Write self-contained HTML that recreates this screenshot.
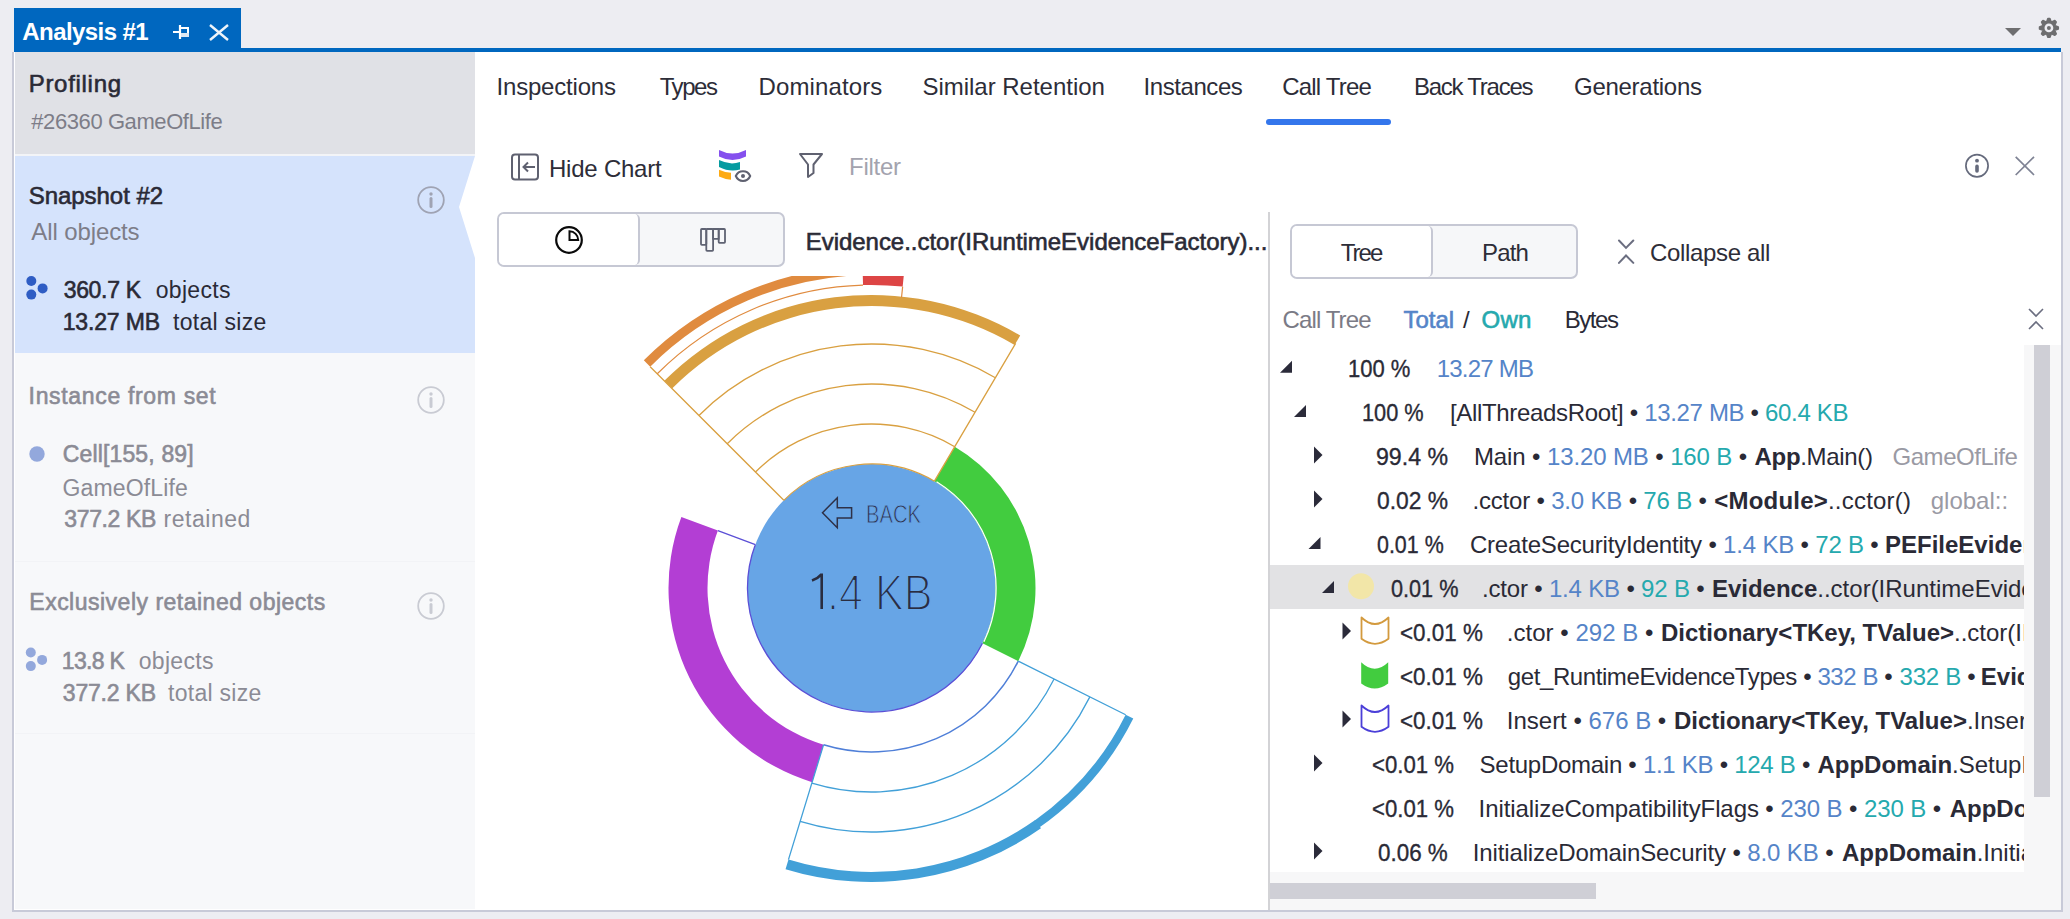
<!DOCTYPE html>
<html><head><meta charset="utf-8">
<style>
html,body{margin:0;padding:0;}
body{width:2070px;height:919px;background:#EDEDF2;position:relative;overflow:hidden;font-family:"Liberation Sans",sans-serif;}
.a{position:absolute;}
.t{position:absolute;white-space:pre;line-height:1;font-family:"Liberation Sans",sans-serif;}
</style></head><body>
<!-- tab -->
<div class="a" style="left:14px;top:8px;width:227px;height:44px;background:#0067BF;"></div>
<div class="a" style="left:14px;top:48px;width:2047px;height:4px;background:#0067BF;"></div>
<!-- main frame -->
<div class="a" style="left:12px;top:52px;width:2051px;height:860px;background:#C8CAD8;"></div>
<div class="a" style="left:14px;top:52px;width:2047px;height:858px;background:#FFFFFF;"></div>
<!-- left panel -->
<div class="a" style="left:15px;top:353px;width:460px;height:556px;background:#F7F8FA;"></div>
<div class="a" style="left:15px;top:561px;width:460px;height:1px;background:#F2F3F6;"></div>
<div class="a" style="left:15px;top:733px;width:460px;height:1px;background:#F2F3F6;"></div>
<div class="a" style="left:15px;top:52px;width:460px;height:102px;background:#E0E1E6;"></div>
<div class="a" style="left:15px;top:154px;width:460px;height:2px;background:#F3F4F7;"></div>
<div class="a" style="left:15px;top:156px;width:460px;height:197px;background:#D5E3FC;clip-path:polygon(0 0,460px 0,444px 51px,460px 102px,460px 197px,0 197px);"></div>
<!-- segmented chart control -->
<div class="a" style="left:497px;top:212px;width:284px;height:51px;border:2px solid #C6C8D4;border-radius:7px;background:#F6F7F9;"></div>
<div class="a" style="left:499px;top:214px;width:139px;height:51px;border-right:2px solid #C6C8D4;border-radius:5px;background:#FFFFFF;"></div>
<!-- tree/path control -->
<div class="a" style="left:1290px;top:224px;width:284px;height:51px;border:2px solid #C6C8D4;border-radius:7px;background:#F6F7F9;"></div>
<div class="a" style="left:1292px;top:226px;width:139px;height:51px;border-right:2px solid #C6C8D4;border-radius:5px;background:#FFFFFF;"></div>
<!-- divider -->
<div class="a" style="left:1268px;top:212px;width:2px;height:698px;background:#D3D3D6;"></div>
<!-- call tree underline -->
<div class="a" style="left:1266px;top:119px;width:125px;height:6px;border-radius:3px;background:#3476EC;"></div>
<!-- selected row -->
<div class="a" style="left:1270px;top:565px;width:754px;height:44px;background:#E2E2E4;"></div>
<svg class='a' style='left:0;top:0' width='2070' height='919' viewBox='0 0 2070 919'><defs><clipPath id='cc'><rect x='476' y='276' width='792' height='634'/></clipPath></defs><g clip-path='url(#cc)'><circle cx='871.5' cy='588.0' r='124' fill='#67A5E6'/><path d='M954.74,446.69 A164,164 0 0 1 1018.27,661.18 L982.47,643.33 A124,124 0 0 0 934.43,481.16 Z' fill='#42CC3F'/><path d='M812.15,782.13 A203,203 0 0 1 681.36,516.91 L717.89,530.57 A164,164 0 0 0 823.55,744.83 Z' fill='#B33ED4'/><path d='M936.60,481.76 A124.6,124.6 0 0 1 983.96,641.64' fill='none' stroke='#FFFFFF' stroke-width='1.2'/><path d='M982.47,643.33 A124,124 0 0 1 755.35,544.57 M755.35,544.57 L717.89,530.57' fill='none' stroke='#5B4FD6' stroke-width='1.3'/><path d='M1018.27,661.18 A164,164 0 0 1 823.55,744.83' fill='none' stroke='#4F7FD8' stroke-width='1.5'/><path d='M1018.27,661.18 L1125.66,714.72 M823.55,744.83 L788.47,859.59 M1054.07,679.02 A204,204 0 0 1 811.86,783.09 M1089.86,696.87 A244,244 0 0 1 800.16,821.34' fill='none' stroke='#42A0D8' stroke-width='1.3'/><path d='M1133.27,718.51 A292.5,292.5 0 0 1 1039.27,827.60 L1034.40,820.64 A284,284 0 0 0 1125.66,714.72 Z' fill='#42A0D8'/><path d='M1040.97,828.24 A294,294 0 0 1 785.54,869.15 L788.47,859.59 A284,284 0 0 0 1035.21,820.07 Z' fill='#42A0D8'/><path d='M783.82,500.32 A124,124 0 0 1 934.43,481.16' fill='none' stroke='#D9A041' stroke-width='1.2'/><path d='M783.82,500.32 L650.18,366.68 M934.43,481.16 L1015.64,343.30 M755.53,472.03 A164,164 0 0 1 954.74,446.69 M727.25,443.75 A204,204 0 0 1 975.04,412.23 M698.97,415.47 A244,244 0 0 1 995.34,377.76' fill='none' stroke='#D9A041' stroke-width='1.3'/><path d='M664.32,380.82 A293,293 0 0 1 1020.21,335.54 L1014.63,345.02 A282,282 0 0 0 672.10,388.60 Z' fill='#D9A041'/><path d='M657.25,373.75 A303,303 0 0 1 863.04,285.12 M901.52,297.55 L902.65,286.61' fill='none' stroke='#E08B3F' stroke-width='1.2'/><path d='M862.73,274.12 A314,314 0 0 1 903.78,275.66 L902.65,286.61 A303,303 0 0 0 863.04,285.12 Z' fill='#DD4545'/><path d='M643.81,360.31 A322,322 0 0 1 862.51,266.13 L862.76,275.12 A313,313 0 0 0 650.18,366.68 Z' fill='#E08B3F'/></g></svg>
<svg class='a' style='left:0;top:0' width='2070' height='919' viewBox='0 0 2070 919'><path d='M173,32 H180 M180,25 V39' stroke='#fff' stroke-width='2.2' fill='none'/><path d='M181,28 H188 V36 H181' stroke='#fff' stroke-width='2' fill='none'/><rect x='181' y='33' width='8' height='4' fill='#dde8f3'/><path d='M210,25 L228,40 M228,25 L210,40' stroke='#eef4fa' stroke-width='2.4' fill='none'/><path d='M2005,28 H2021 L2013,36 Z' fill='#6E6E70'/><path d='M2047.92,18.55 L2049.88,18.55 L2051.27,22.17 L2054.82,20.59 L2056.21,21.98 L2054.63,25.53 L2058.25,26.92 L2058.25,28.88 L2054.63,30.27 L2056.21,33.82 L2054.82,35.21 L2051.27,33.63 L2049.88,37.25 L2047.92,37.25 L2046.53,33.63 L2042.98,35.21 L2041.59,33.82 L2043.17,30.27 L2039.55,28.88 L2039.55,26.92 L2043.17,25.53 L2041.59,21.98 L2042.98,20.59 L2046.53,22.17 Z' fill='#6E6E70' stroke='#6E6E70' stroke-width='1.6' stroke-linejoin='round'/><circle cx='2048.9' cy='27.9' r='4.4' fill='#EDEDF2'/><circle cx='2048.9' cy='27.9' r='2' fill='#6E6E70'/><rect x='512' y='154.5' width='26' height='25' rx='3' stroke='#5F6170' stroke-width='2' fill='none'/><path d='M519,155 V179 M535,167 H524 M528,162.5 L523.5,167 L528,171.5' stroke='#5F6170' stroke-width='2' fill='none'/><path d='M719,150 Q732.5,157 746,150 V156.6 Q732.5,163.6 719,156.6 Z' fill='#8550EE'/><path d='M719,160.1 Q730,165.5 740,162 V169.5 Q730,172.5 719,167 Z' fill='#069BA0'/><path d='M719,169.8 Q724.5,172.5 731,172.7 V179.7 Q724.5,179 719,176.4 Z' fill='#FDAA14'/><path d='M735.8,176 C738.5,169.5 747.5,169.5 750.2,176 C747.5,182.5 738.5,182.5 735.8,176 Z' stroke='#5F6170' stroke-width='2' fill='#fff'/><circle cx='743' cy='176' r='2' fill='#5F6170'/><path d='M800,154 H822 L813.5,164.5 V173 L808,177 V164.5 Z' stroke='#5F6170' stroke-width='2' fill='none' stroke-linejoin='round'/><circle cx='1977' cy='165.8' r='11.1' stroke='#656A7C' stroke-width='1.7' fill='none'/><circle cx='1977' cy='160.7' r='1.9' fill='#656A7C'/><path d='M1977,166.4 V171' stroke='#656A7C' stroke-width='3.6' stroke-linecap='round'/><path d='M2015.7,156.8 L2034,175 M2034,156.8 L2015.7,175' stroke='#7F8394' stroke-width='1.7' fill='none'/><circle cx='569' cy='240' r='12.8' stroke='#0a0a0a' stroke-width='2.2' fill='none'/><path d='M569.5,240 V231.3 A8.7,8.7 0 0 1 578.2,240 Z' stroke='#0a0a0a' stroke-width='2' fill='none' stroke-linejoin='miter'/><g stroke='#5F6373' stroke-width='1.8' fill='none' stroke-linejoin='round'><rect x='701' y='229' width='5.3' height='15.8' rx='0.8'/><rect x='706.3' y='229' width='6.8' height='21.9' rx='0.8'/><rect x='713.1' y='229' width='5.6' height='9.9'/><rect x='718.7' y='229' width='6.3' height='13.8' rx='0.8'/></g><path d='M1619,240.5 L1626,247.9 L1633.3,240.5 M1619,262.9 L1626,255.5 L1633.3,262.9' stroke='#6B6E80' stroke-width='2' fill='none' stroke-linecap='round'/><path d='M2029,309 L2036,316 L2043,309 M2029,329 L2036,322 L2043,329' stroke='#6B6E80' stroke-width='1.6' fill='none'/><circle cx='431' cy='200' r='12.8' stroke='#9FA3B3' stroke-width='1.8' fill='none'/><circle cx='431' cy='194' r='1.7' fill='#9FA3B3'/><path d='M431,198.5 V206.5' stroke='#9FA3B3' stroke-width='3' stroke-linecap='round'/><circle cx='431' cy='400' r='12.8' stroke='#C9CBD3' stroke-width='1.8' fill='none'/><circle cx='431' cy='394' r='1.7' fill='#C9CBD3'/><path d='M431,398.5 V406.5' stroke='#C9CBD3' stroke-width='3' stroke-linecap='round'/><circle cx='431' cy='606' r='12.8' stroke='#C9CBD3' stroke-width='1.8' fill='none'/><circle cx='431' cy='600' r='1.7' fill='#C9CBD3'/><path d='M431,604.5 V612.5' stroke='#C9CBD3' stroke-width='3' stroke-linecap='round'/><g fill='#2F5DC4'><circle cx='31.3' cy='281' r='5'/><circle cx='31.3' cy='294.6' r='5'/><circle cx='42.6' cy='288.4' r='5'/></g><g fill='#93A8DC'><circle cx='30.8' cy='652.5' r='5'/><circle cx='30.8' cy='666.1' r='5'/><circle cx='42.1' cy='659.9' r='5'/></g><circle cx='37' cy='454' r='7.7' fill='#93A8DC'/><path d='M821.7,609 V573.6 M821.7,574.2 Q818,578.5 812,580.6' stroke='#2A2D40' stroke-width='2.6' fill='none'/><path d='M822.5,512.7 L837.3,497.8 V507.7 H851.6 V518.1 H837.3 V527.7 Z' stroke='#2E3148' stroke-width='1.5' fill='none' stroke-linejoin='miter'/><path d='M1280,372.7 L1292,360.7 V372.7 Z' fill='#2B2B3A'/><path d='M1294,416.9 L1306,404.9 V416.9 Z' fill='#2B2B3A'/><path d='M1314,446.5 L1322.5,455 L1314,463.5 Z' fill='#2B2B3A'/><path d='M1314,490.5 L1322.5,499 L1314,507.5 Z' fill='#2B2B3A'/><path d='M1308.5,548.9 L1320.5,536.9 V548.9 Z' fill='#2B2B3A'/><path d='M1322,592.9 L1334,580.9 V592.9 Z' fill='#2B2B3A'/><path d='M1342.5,622.5 L1351.0,631 L1342.5,639.5 Z' fill='#2B2B3A'/><path d='M1342.5,710.5 L1351.0,719 L1342.5,727.5 Z' fill='#2B2B3A'/><path d='M1314,754.5 L1322.5,763 L1314,771.5 Z' fill='#2B2B3A'/><path d='M1314,842.5 L1322.5,851 L1314,859.5 Z' fill='#2B2B3A'/><circle cx='1361' cy='586.2' r='13' fill='#F2E6A8'/><path d='M1361.5,617.5 Q1375.0,630.5 1388.5,617.5 V638.8 Q1375.0,648.8 1361.5,638.8 Z' stroke='#D39A3E' stroke-width='1.8' fill='none' stroke-linejoin='round'/><path d='M1361.2,662.2 Q1374.7,675.2 1388.2,662.2 V683.5 Q1374.7,693.5 1361.2,683.5 Z' fill='#42CC3F'/><path d='M1361.5,705.5 Q1375.0,718.5 1388.5,705.5 V726.8 Q1375.0,736.8 1361.5,726.8 Z' stroke='#4B3FD8' stroke-width='1.8' fill='none' stroke-linejoin='round'/></svg>
<div class='t' style='left:22.30px;top:19.98px;font-size:24px;font-weight:700;color:#FFFFFF;letter-spacing:-0.573px;'>Analysis #1</div>
<div class='t' style='left:496.50px;top:75.28px;font-size:24px;font-weight:400;color:#2D2D38;letter-spacing:-0.191px;'>Inspections</div>
<div class='t' style='left:659.70px;top:75.28px;font-size:24px;font-weight:400;color:#2D2D38;letter-spacing:-1.433px;'>Types</div>
<div class='t' style='left:758.50px;top:75.28px;font-size:24px;font-weight:400;color:#2D2D38;letter-spacing:0.121px;'>Dominators</div>
<div class='t' style='left:922.40px;top:75.28px;font-size:24px;font-weight:400;color:#2D2D38;letter-spacing:-0.012px;'>Similar Retention</div>
<div class='t' style='left:1143.50px;top:75.28px;font-size:24px;font-weight:400;color:#2D2D38;letter-spacing:-0.428px;'>Instances</div>
<div class='t' style='left:1282.30px;top:75.28px;font-size:24px;font-weight:400;color:#2D2D38;letter-spacing:-0.815px;'>Call Tree</div>
<div class='t' style='left:1414.00px;top:75.28px;font-size:24px;font-weight:400;color:#2D2D38;letter-spacing:-1.248px;'>Back Traces</div>
<div class='t' style='left:1574.00px;top:75.28px;font-size:24px;font-weight:400;color:#2D2D38;letter-spacing:-0.275px;'>Generations</div>
<div class='t' style='left:549.00px;top:156.68px;font-size:24px;font-weight:400;color:#2D2D38;letter-spacing:-0.227px;'>Hide Chart</div>
<div class='t' style='left:849.00px;top:155.18px;font-size:24px;font-weight:400;color:#A3A3AE;letter-spacing:-0.268px;'>Filter</div>
<div class='t' style='left:805.70px;top:229.78px;font-size:24px;font-weight:400;color:#2A2A36;letter-spacing:-0.029px;-webkit-text-stroke:0.6px #2A2A36;'>Evidence..ctor(IRuntimeEvidenceFactory)...</div>
<div class='t' style='left:1340.70px;top:241.08px;font-size:24px;font-weight:400;color:#2D2D38;letter-spacing:-1.936px;'>Tree</div>
<div class='t' style='left:1482.00px;top:241.08px;font-size:24px;font-weight:400;color:#2D2D38;letter-spacing:-0.841px;'>Path</div>
<div class='t' style='left:1650.00px;top:241.08px;font-size:24px;font-weight:400;color:#2D2D38;letter-spacing:-0.339px;'>Collapse all</div>
<div class='t' style='left:1282.50px;top:308.48px;font-size:24px;font-weight:400;color:#7B7B86;letter-spacing:-0.878px;'>Call Tree</div>
<div class='t' style='left:1403.60px;top:308.48px;font-size:24px;font-weight:400;color:#5584C8;letter-spacing:-0.066px;-webkit-text-stroke:0.6px #5584C8;'>Total</div>
<div class='t' style='left:1463.00px;top:308.48px;font-size:24px;font-weight:400;color:#2A2A36;letter-spacing:0.000px;'>/</div>
<div class='t' style='left:1481.50px;top:308.48px;font-size:24px;font-weight:400;color:#25A9AE;letter-spacing:0.250px;-webkit-text-stroke:0.6px #25A9AE;'>Own</div>
<div class='t' style='left:1564.70px;top:308.48px;font-size:24px;font-weight:400;color:#2A2A36;letter-spacing:-1.431px;'>Bytes</div>
<div class='t' style='left:28.70px;top:72.18px;font-size:24px;font-weight:400;color:#2A2A36;letter-spacing:0.705px;-webkit-text-stroke:0.6px #2A2A36;'>Profiling</div>
<div class='t' style='left:31.30px;top:111.38px;font-size:22px;font-weight:400;color:#7D7D88;letter-spacing:-0.418px;'>#26360 GameOfLife</div>
<div class='t' style='left:28.70px;top:183.68px;font-size:24px;font-weight:400;color:#2A2A36;letter-spacing:-0.043px;-webkit-text-stroke:0.6px #2A2A36;'>Snapshot #2</div>
<div class='t' style='left:31.30px;top:219.98px;font-size:24px;font-weight:400;color:#7D7D88;letter-spacing:-0.108px;'>All objects</div>
<div class='t' style='left:63.70px;top:278.83px;font-size:23px;font-weight:400;color:#2A2A36;letter-spacing:-0.324px;-webkit-text-stroke:0.6px #2A2A36;'>360.7 K</div>
<div class='t' style='left:155.70px;top:278.83px;font-size:23px;font-weight:400;color:#2A2A36;letter-spacing:0.304px;'>objects</div>
<div class='t' style='left:62.70px;top:311.13px;font-size:23px;font-weight:400;color:#2A2A36;letter-spacing:-0.158px;-webkit-text-stroke:0.6px #2A2A36;'>13.27 MB</div>
<div class='t' style='left:173.00px;top:311.13px;font-size:23px;font-weight:400;color:#2A2A36;letter-spacing:0.270px;'>total size</div>
<div class='t' style='left:28.60px;top:385.23px;font-size:23px;font-weight:400;color:#8B8B95;letter-spacing:0.668px;-webkit-text-stroke:0.6px #8B8B95;'>Instance from set</div>
<div class='t' style='left:62.70px;top:443.43px;font-size:23px;font-weight:400;color:#8B8B95;letter-spacing:0.154px;-webkit-text-stroke:0.6px #8B8B95;'>Cell[155, 89]</div>
<div class='t' style='left:62.40px;top:476.53px;font-size:23px;font-weight:400;color:#8B8B95;letter-spacing:0.155px;'>GameOfLife</div>
<div class='t' style='left:64.30px;top:507.83px;font-size:23px;font-weight:400;color:#8B8B95;letter-spacing:-0.370px;-webkit-text-stroke:0.6px #8B8B95;'>377.2 KB</div>
<div class='t' style='left:163.50px;top:507.83px;font-size:23px;font-weight:400;color:#8B8B95;letter-spacing:0.539px;'>retained</div>
<div class='t' style='left:29.30px;top:591.33px;font-size:23px;font-weight:400;color:#8B8B95;letter-spacing:0.495px;-webkit-text-stroke:0.6px #8B8B95;'>Exclusively retained objects</div>
<div class='t' style='left:61.80px;top:649.93px;font-size:23px;font-weight:400;color:#8B8B95;letter-spacing:-0.691px;-webkit-text-stroke:0.6px #8B8B95;'>13.8 K</div>
<div class='t' style='left:138.70px;top:649.93px;font-size:23px;font-weight:400;color:#8B8B95;letter-spacing:0.321px;'>objects</div>
<div class='t' style='left:62.80px;top:681.93px;font-size:23px;font-weight:400;color:#8B8B95;letter-spacing:-0.198px;-webkit-text-stroke:0.6px #8B8B95;'>377.2 KB</div>
<div class='t' style='left:168.00px;top:681.93px;font-size:23px;font-weight:400;color:#8B8B95;letter-spacing:0.281px;'>total size</div>
<div class='t' style='left:865.56px;top:502.14px;font-size:25px;font-weight:400;color:#2E3148;letter-spacing:0.000px;-webkit-text-stroke:0.8px #67A5E6;transform:scaleX(0.8079);transform-origin:0 0;'>BACK</div>
<div class='t' style='left:827.13px;top:567.57px;font-size:50px;font-weight:400;color:#2A2D40;letter-spacing:0.000px;-webkit-text-stroke:1.9px #67A5E6;transform:scaleX(0.8629);transform-origin:0 0;'>.4 KB</div>
<div class='a' style='left:0;top:0;width:2070px;height:919px;clip-path:inset(345px 46px 47px 1270px)'>
<div class='t' style='left:1348.14px;top:357.48px;font-size:24px;font-weight:400;color:#2A2A36;letter-spacing:0.000px;-webkit-text-stroke:0.35px #2A2A36;transform:scaleX(0.9171);transform-origin:0 0;'>100 %</div>
<div class='t' style='left:1436.70px;top:357.48px;font-size:24px;font-weight:400;color:#5584C8;letter-spacing:-0.774px;'>13.27 MB</div>
<div class='t' style='left:1362.05px;top:401.48px;font-size:24px;font-weight:400;color:#2A2A36;letter-spacing:0.000px;-webkit-text-stroke:0.35px #2A2A36;transform:scaleX(0.9066);transform-origin:0 0;'>100 %</div>
<div class='t' style='left:1449.90px;top:401.48px;font-size:24px;font-weight:400;color:#2A2A36;letter-spacing:-0.329px;'>[AllThreadsRoot] • <span style='color:#5584C8'>13.27 MB</span> • <span style='color:#25A9AE'>60.4 KB</span></div>
<div class='t' style='left:1376.10px;top:445.48px;font-size:24px;font-weight:400;color:#2A2A36;letter-spacing:0.000px;-webkit-text-stroke:0.35px #2A2A36;transform:scaleX(0.9643);transform-origin:0 0;'>99.4 %</div>
<div class='t' style='left:1474.00px;top:445.48px;font-size:24px;font-weight:400;color:#2A2A36;letter-spacing:-0.118px;'>Main • <span style='color:#5584C8'>13.20 MB</span> • <span style='color:#25A9AE'>160 B</span> • </div>
<div class='t' style='left:1754.60px;top:445.48px;font-size:24px;font-weight:400;color:#2A2A36;letter-spacing:-0.326px;'><span style='font-weight:700'>App</span>.Main()</div>
<div class='t' style='left:1892.50px;top:445.48px;font-size:24px;font-weight:400;color:#9A9AA4;letter-spacing:-0.460px;'>GameOfLife</div>
<div class='t' style='left:1377.07px;top:489.48px;font-size:24px;font-weight:400;color:#2A2A36;letter-spacing:0.000px;-webkit-text-stroke:0.35px #2A2A36;transform:scaleX(0.9514);transform-origin:0 0;'>0.02 %</div>
<div class='t' style='left:1472.40px;top:489.48px;font-size:24px;font-weight:400;color:#2A2A36;letter-spacing:-0.180px;'>.cctor • <span style='color:#5584C8'>3.0 KB</span> • <span style='color:#25A9AE'>76 B</span> • </div>
<div class='t' style='left:1714.20px;top:489.48px;font-size:24px;font-weight:400;color:#2A2A36;letter-spacing:0.215px;'><span style='font-weight:700'>&lt;Module&gt;</span>..cctor()</div>
<div class='t' style='left:1930.70px;top:489.48px;font-size:24px;font-weight:400;color:#9A9AA4;letter-spacing:0.011px;'>global::</div>
<div class='t' style='left:1377.06px;top:533.48px;font-size:24px;font-weight:400;color:#2A2A36;letter-spacing:0.000px;-webkit-text-stroke:0.35px #2A2A36;transform:scaleX(0.8926);transform-origin:0 0;'>0.01 %</div>
<div class='t' style='left:1469.90px;top:533.48px;font-size:24px;font-weight:400;color:#2A2A36;letter-spacing:-0.186px;'>CreateSecurityIdentity • <span style='color:#5584C8'>1.4 KB</span> • <span style='color:#25A9AE'>72 B</span> • </div>
<div class='t' style='left:1885.00px;top:533.48px;font-size:24px;font-weight:700;color:#2A2A36;letter-spacing:0.000px;'>PEFileEvidenceFactory</div>
<div class='t' style='left:1390.66px;top:577.48px;font-size:24px;font-weight:400;color:#2A2A36;letter-spacing:0.000px;-webkit-text-stroke:0.35px #2A2A36;transform:scaleX(0.9019);transform-origin:0 0;'>0.01 %</div>
<div class='t' style='left:1482.00px;top:577.48px;font-size:24px;font-weight:400;color:#2A2A36;letter-spacing:-0.184px;'>.ctor • <span style='color:#5584C8'>1.4 KB</span> • <span style='color:#25A9AE'>92 B</span> • </div>
<div class='t' style='left:1711.90px;top:577.48px;font-size:24px;font-weight:400;color:#2A2A36;letter-spacing:0.000px;'><span style='font-weight:700'>Evidence</span>..ctor(IRuntimeEvidenceFactory)</div>
<div class='t' style='left:1399.53px;top:621.48px;font-size:24px;font-weight:400;color:#2A2A36;letter-spacing:0.000px;-webkit-text-stroke:0.35px #2A2A36;transform:scaleX(0.9334);transform-origin:0 0;'>&lt;0.01 %</div>
<div class='t' style='left:1506.80px;top:621.48px;font-size:24px;font-weight:400;color:#2A2A36;letter-spacing:0.021px;'>.ctor • <span style='color:#5584C8'>292 B</span> • </div>
<div class='t' style='left:1661.00px;top:621.48px;font-size:24px;font-weight:400;color:#2A2A36;letter-spacing:0.000px;'><span style='font-weight:700'>Dictionary&lt;TKey, TValue&gt;</span>..ctor(IEqualityComparer)</div>
<div class='t' style='left:1399.53px;top:665.48px;font-size:24px;font-weight:400;color:#2A2A36;letter-spacing:0.000px;-webkit-text-stroke:0.35px #2A2A36;transform:scaleX(0.9334);transform-origin:0 0;'>&lt;0.01 %</div>
<div class='t' style='left:1507.80px;top:665.48px;font-size:24px;font-weight:400;color:#2A2A36;letter-spacing:-0.407px;'>get_RuntimeEvidenceTypes • <span style='color:#5584C8'>332 B</span> • </div>
<div class='t' style='left:1899.60px;top:665.48px;font-size:24px;font-weight:400;color:#2A2A36;letter-spacing:-0.282px;'><span style='color:#25A9AE'>332 B</span> • </div>
<div class='t' style='left:1980.80px;top:665.48px;font-size:24px;font-weight:700;color:#2A2A36;letter-spacing:0.000px;'>Evidence</div>
<div class='t' style='left:1399.53px;top:709.48px;font-size:24px;font-weight:400;color:#2A2A36;letter-spacing:0.000px;-webkit-text-stroke:0.35px #2A2A36;transform:scaleX(0.9334);transform-origin:0 0;'>&lt;0.01 %</div>
<div class='t' style='left:1506.80px;top:709.48px;font-size:24px;font-weight:400;color:#2A2A36;letter-spacing:-0.007px;'>Insert • <span style='color:#5584C8'>676 B</span> • </div>
<div class='t' style='left:1673.90px;top:709.48px;font-size:24px;font-weight:400;color:#2A2A36;letter-spacing:0.000px;'><span style='font-weight:700'>Dictionary&lt;TKey, TValue&gt;</span>.Insert(TKey)</div>
<div class='t' style='left:1372.14px;top:753.48px;font-size:24px;font-weight:400;color:#2A2A36;letter-spacing:0.000px;-webkit-text-stroke:0.35px #2A2A36;transform:scaleX(0.9243);transform-origin:0 0;'>&lt;0.01 %</div>
<div class='t' style='left:1479.60px;top:753.48px;font-size:24px;font-weight:400;color:#2A2A36;letter-spacing:-0.277px;'>SetupDomain • <span style='color:#5584C8'>1.1 KB</span> • <span style='color:#25A9AE'>124 B</span> • </div>
<div class='t' style='left:1817.40px;top:753.48px;font-size:24px;font-weight:400;color:#2A2A36;letter-spacing:0.000px;'><span style='font-weight:700'>AppDomain</span>.SetupDomain</div>
<div class='t' style='left:1372.14px;top:797.48px;font-size:24px;font-weight:400;color:#2A2A36;letter-spacing:0.000px;-webkit-text-stroke:0.35px #2A2A36;transform:scaleX(0.9243);transform-origin:0 0;'>&lt;0.01 %</div>
<div class='t' style='left:1478.60px;top:797.48px;font-size:24px;font-weight:400;color:#2A2A36;letter-spacing:-0.092px;'>InitializeCompatibilityFlags • <span style='color:#5584C8'>230 B</span> • <span style='color:#25A9AE'>230 B</span> • </div>
<div class='t' style='left:1949.70px;top:797.48px;font-size:24px;font-weight:700;color:#2A2A36;letter-spacing:0.000px;'>AppDomain</div>
<div class='t' style='left:1377.66px;top:841.48px;font-size:24px;font-weight:400;color:#2A2A36;letter-spacing:0.000px;-webkit-text-stroke:0.35px #2A2A36;transform:scaleX(0.9340);transform-origin:0 0;'>0.06 %</div>
<div class='t' style='left:1472.70px;top:841.48px;font-size:24px;font-weight:400;color:#2A2A36;letter-spacing:-0.120px;'>InitializeDomainSecurity • <span style='color:#5584C8'>8.0 KB</span> • </div>
<div class='t' style='left:1842.00px;top:841.48px;font-size:24px;font-weight:400;color:#2A2A36;letter-spacing:0.000px;'><span style='font-weight:700'>AppDomain</span>.InitializeDomainSecurity</div>
</div>
<!-- scrollbars -->
<div class="a" style="left:2024px;top:345px;width:37px;height:565px;background:#F7F7F8;"></div>
<div class="a" style="left:2034px;top:345px;width:16px;height:452px;background:#CFCFD6;"></div>
<div class="a" style="left:1270px;top:872px;width:791px;height:38px;background:#F7F7F8;"></div>
<div class="a" style="left:1270px;top:883px;width:326px;height:16px;background:#CFCFD6;"></div>

</body></html>
